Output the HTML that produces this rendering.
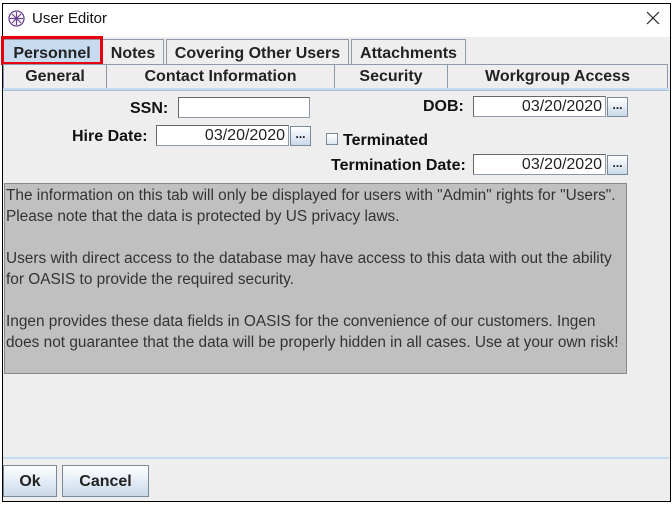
<!DOCTYPE html>
<html><head><meta charset="utf-8"><style>
*{box-sizing:border-box;margin:0;padding:0}
body{width:672px;height:507px;background:#fff;position:relative;overflow:hidden;font-family:"Liberation Sans",Arial,sans-serif}
.abs{position:absolute}
.win{left:2px;top:3px;width:669px;height:499px;border:1px solid #000;background:#eeeeee}
.title{left:3px;top:4px;width:667px;height:33px;background:#fff}
.tab{position:absolute;height:25px;border:1px solid #8e9aa6;border-bottom:none;background:#eeeeee;font-weight:bold;font-size:16px;color:#222;text-align:center;line-height:27px}
.lbl{position:absolute;font-weight:bold;font-size:16px;color:#111}
.fld{position:absolute;height:21px;background:#fff;border:1px solid #8e9aa6;border-left-color:#666;border-top-color:#666;font-size:16px;color:#222;text-align:right;padding-right:3px;line-height:19px}
.dot{position:absolute;width:21px;height:20px;border:1px solid #7a8a99;background:linear-gradient(#fff,#c9d9ea);font-size:12px;font-weight:bold;text-align:center;line-height:14px;color:#111}
.btn{position:absolute;height:32px;border:1px solid #7a8a99;background:linear-gradient(#fff,#c9d9ea);font-weight:bold;font-size:16px;text-align:center;line-height:32px;color:#222}
.msg{left:4px;top:183px;width:623px;height:191px;background:#c0c0c0;border:1px solid #8a8a8a;font-size:15.4px;color:#333;line-height:21px;padding:1px 0 0 1px;white-space:nowrap}
</style></head><body>
<div class="abs win"></div>
<div class="abs title"></div>
<svg class="abs" style="left:8px;top:10px" width="17" height="17" viewBox="0 0 17 17"><circle cx="8.5" cy="8.5" r="7.5" fill="none" stroke="#6b3f8f" stroke-width="1.3"/><path d="M8.5 2v13M2 8.5h13M4 4l9 9M13 4l-9 9" stroke="#6b3f8f" stroke-width="1.2"/></svg>
<div class="abs" style="left:32px;top:10px;font-size:15px;color:#111">User Editor</div>
<svg class="abs" style="left:646px;top:11px" width="14" height="14"><path d="M1 1L13 13M13 1L1 13" stroke="#222" stroke-width="1.2"/></svg>

<div class="tab" style="left:102px;top:39px;width:62px">Notes</div>
<div class="tab" style="left:166px;top:39px;width:183px">Covering Other Users</div>
<div class="tab" style="left:351px;top:39px;width:115px">Attachments</div>
<div class="tab" style="left:3px;top:39px;width:98px;background:#c6daf0">Personnel</div>
<div class="abs" style="left:1px;top:36px;width:102px;height:29px;border:3px solid #e8000c"></div>

<div class="tab" style="left:3px;top:64px;width:104px;line-height:24px">General</div>
<div class="tab" style="left:106px;top:64px;width:229px;line-height:24px">Contact Information</div>
<div class="tab" style="left:334px;top:64px;width:114px;line-height:24px">Security</div>
<div class="tab" style="left:447px;top:64px;width:221px;line-height:24px">Workgroup Access</div>
<div class="abs" style="left:3px;top:88px;width:666px;height:3px;background:#c6daf0;border-bottom:1px solid #a8bdd3"></div>

<div class="lbl" style="left:130px;top:100px">SSN:</div>
<div class="fld" style="left:178px;top:97px;width:132px"></div>
<div class="lbl" style="left:72px;top:128px">Hire Date:</div>
<div class="fld" style="left:156px;top:125px;width:133px">03/20/2020</div>
<div class="dot" style="left:290px;top:126px">...</div>
<div class="lbl" style="left:423px;top:98px">DOB:</div>
<div class="fld" style="left:473px;top:96px;width:133px">03/20/2020</div>
<div class="dot" style="left:607px;top:97px">...</div>
<div class="abs" style="left:326px;top:133px;width:12px;height:12px;border:1px solid #7a8a99;background:linear-gradient(#fff,#dde7f2)"></div>
<div class="lbl" style="left:343px;top:132px">Terminated</div>
<div class="lbl" style="left:331px;top:157px">Termination Date:</div>
<div class="fld" style="left:473px;top:154px;width:133px">03/20/2020</div>
<div class="dot" style="left:607px;top:155px">...</div>

<div class="abs msg">The information on this tab will only be displayed for users with "Admin" rights for "Users".<br>Please note that the data is protected by US privacy laws.<br><br>Users with direct access to the database may have access to this data with out the ability<br>for OASIS to provide the required security.<br><br>Ingen provides these data fields in OASIS for the convenience of our customers. Ingen<br>does not guarantee that the data will be properly hidden in all cases. Use at your own risk!</div>

<div class="abs" style="left:3px;top:457px;width:666px;height:2px;background:#c6daf0"></div>
<div class="btn" style="left:3px;top:465px;width:54px">Ok</div>
<div class="btn" style="left:62px;top:465px;width:87px">Cancel</div>
</body></html>
